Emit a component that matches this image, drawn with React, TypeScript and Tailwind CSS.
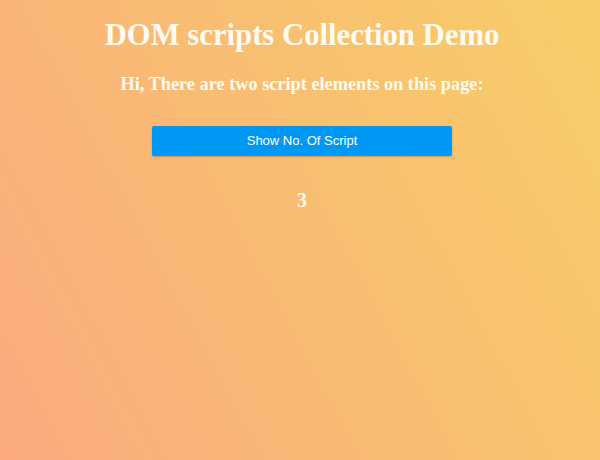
import React from "react";

export default function App() {
  return (
    <div className="w-[600px] h-[460px] overflow-hidden bg-[#fbab7e] bg-[linear-gradient(62deg,#fbab7e_0%,#f7ce68_100%)] flex flex-col items-center pl-[4px] text-[#fffbf2]">
      <h1 className="mt-[20px] text-[30.7px] leading-none font-bold font-['Liberation_Serif',serif]">
        DOM scripts Collection Demo
      </h1>
      <h3 className="mt-[24px] text-[18.3px] leading-none font-bold font-['Liberation_Serif',serif]">
        Hi, There are two script elements on this page:
      </h3>
      <button className="mt-[33px] w-[300px] h-[30px] bg-[#0098f5] rounded-[2px] shadow-[0_1px_2px_rgba(0,0,0,0.2)] text-white text-[13px] font-['Liberation_Sans',Arial,sans-serif]">
        Show No. Of Script
      </button>
      <h2 className="mt-[34px] text-[20px] leading-none font-bold font-['Liberation_Serif',serif]">
        3
      </h2>
    </div>
  );
}
